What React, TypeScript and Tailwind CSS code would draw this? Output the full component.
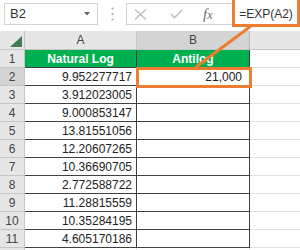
const LOGS = [
  "9.952277717",
  "3.912023005",
  "9.000853147",
  "13.81551056",
  "12.20607265",
  "10.36690705",
  "2.772588722",
  "11.28815559",
  "10.35284195",
  "4.605170186",
];

function FormulaBar() {
  return (
    <div className="flex h-[31px] items-start pt-[3px]">
      <div className="ml-[4px] flex h-[22px] w-[94px] items-center justify-between border border-[#d4d4d4] pl-[5px] pr-[7px] text-[13px] text-[#333]">
        <span>B2</span>
        <svg width="6" height="4" viewBox="0 0 6 4">
          <path d="M0 0 L6 0 L3 3.5 Z" fill="#666" />
        </svg>
      </div>
      <div className="flex h-[22px] w-[28px] items-center justify-center">
        <svg width="3" height="14" viewBox="0 0 3 14">
          <circle cx="1.5" cy="1.5" r="1.1" fill="#a8a8a8" />
          <circle cx="1.5" cy="7" r="1.1" fill="#a8a8a8" />
          <circle cx="1.5" cy="12.5" r="1.1" fill="#a8a8a8" />
        </svg>
      </div>
      <div className="flex h-[22px] flex-1 items-center border border-r-0 border-[#d4d4d4]">
        <svg className="ml-[7px]" width="13" height="11" viewBox="0 0 13 11">
          <path d="M1 0.5 L12 10.5 M12 0.5 L1 10.5" stroke="#bdbdbd" strokeWidth="1.4" />
        </svg>
        <svg className="ml-[23px]" width="13" height="10" viewBox="0 0 13 10">
          <path d="M1 5 L4.5 8.8 L12 1" stroke="#bdbdbd" strokeWidth="1.4" fill="none" />
        </svg>
        <span className="ml-[20px] font-['Liberation_Serif',serif] text-[15px] italic text-[#6b6b6b]">
          f<span className="text-[12px]">x</span>
        </span>
      </div>
    </div>
  );
}

function HeaderRow() {
  return (
    <div className="flex h-[19px] border-b border-[#c6c6c6] bg-[#e6e6e6] text-[12px] text-[#444]">
      <div className="flex w-[25px] items-end justify-end border-r border-[#c6c6c6] pb-[2px] pr-[2px]">
        <svg width="12" height="11" viewBox="0 0 12 11">
          <path d="M12 0 L12 11 L0 11 Z" fill="#3f7d51" />
        </svg>
      </div>
      <div className="flex w-[112px] items-center justify-center border-r border-[#c6c6c6]">A</div>
      <div className="flex w-[113px] items-center justify-center border-r border-[#b4b4b4] bg-[#d4d4d4]">B</div>
      <div className="flex-1" />
    </div>
  );
}

function Row({ n, a, b, head, active }: { n: number; a?: string; b?: string; head?: boolean; active?: boolean }) {
  return (
    <div className="flex h-[18px] text-[12px]">
      <div
        className={
          active
            ? "flex w-[25px] items-center justify-center border-b border-r border-[#c6c6c6] bg-[#d4d4d4] text-[#444]"
            : "flex w-[25px] items-center justify-center border-b border-r border-[#c6c6c6] bg-[#e6e6e6] text-[#444]"
        }
      >
        {n <= 11 ? n : ""}
      </div>
      {head ? (
        <>
          <div className="flex w-[112px] items-center justify-center border-b border-r border-[#404040] bg-[#00b050] font-bold text-white">
            {a}
          </div>
          <div className="flex w-[113px] items-center justify-center border-b border-r border-[#404040] bg-[#00b050] font-bold text-white">
            {b}
          </div>
        </>
      ) : n <= 11 ? (
        <>
          <div className="flex w-[112px] items-center justify-end border-b border-r border-[#404040] pr-[4px] text-[#222]">
            {a}
          </div>
          <div className="flex w-[113px] items-center justify-end border-b border-r border-[#404040] pr-[7px] text-[#222]">
            {b}
          </div>
        </>
      ) : (
        <>
          <div className="w-[112px] border-b border-r border-[#e1e1e1]" />
          <div className="w-[113px] border-b border-r border-[#e1e1e1]" />
        </>
      )}
      <div className="flex-1 border-b border-[#e1e1e1]" />
    </div>
  );
}

export default function App() {
  return (
    <div className="relative h-[250px] w-[300px] overflow-hidden bg-white font-['Liberation_Sans',sans-serif]">
      <FormulaBar />
      <HeaderRow />
      <Row n={1} a="Natural Log" b="Antilog" head />
      {LOGS.map((v, i) => (
        <Row key={i} n={i + 2} a={v} b={i === 0 ? "21,000" : ""} active={i === 0} />
      ))}
      <Row n={12} />

      {/* callout line */}
      <svg className="absolute left-0 top-0" width="300" height="250" viewBox="0 0 300 250">
        <path d="M251 26 L196 67" stroke="#ed7d31" strokeWidth="3" />
      </svg>

      {/* selected cell B2 */}
      <div className="absolute left-[136px] top-[67px] h-[21px] w-[116px] border-[3px] border-[#ed7d31]" />

      {/* formula callout */}
      <div className="absolute left-[232px] top-[-3px] flex h-[30px] w-[68px] items-center justify-center border-[3px] border-[#ed7d31] bg-white pt-[3px] text-[12px] text-[#333]">
        =EXP(A2)
      </div>
    </div>
  );
}
